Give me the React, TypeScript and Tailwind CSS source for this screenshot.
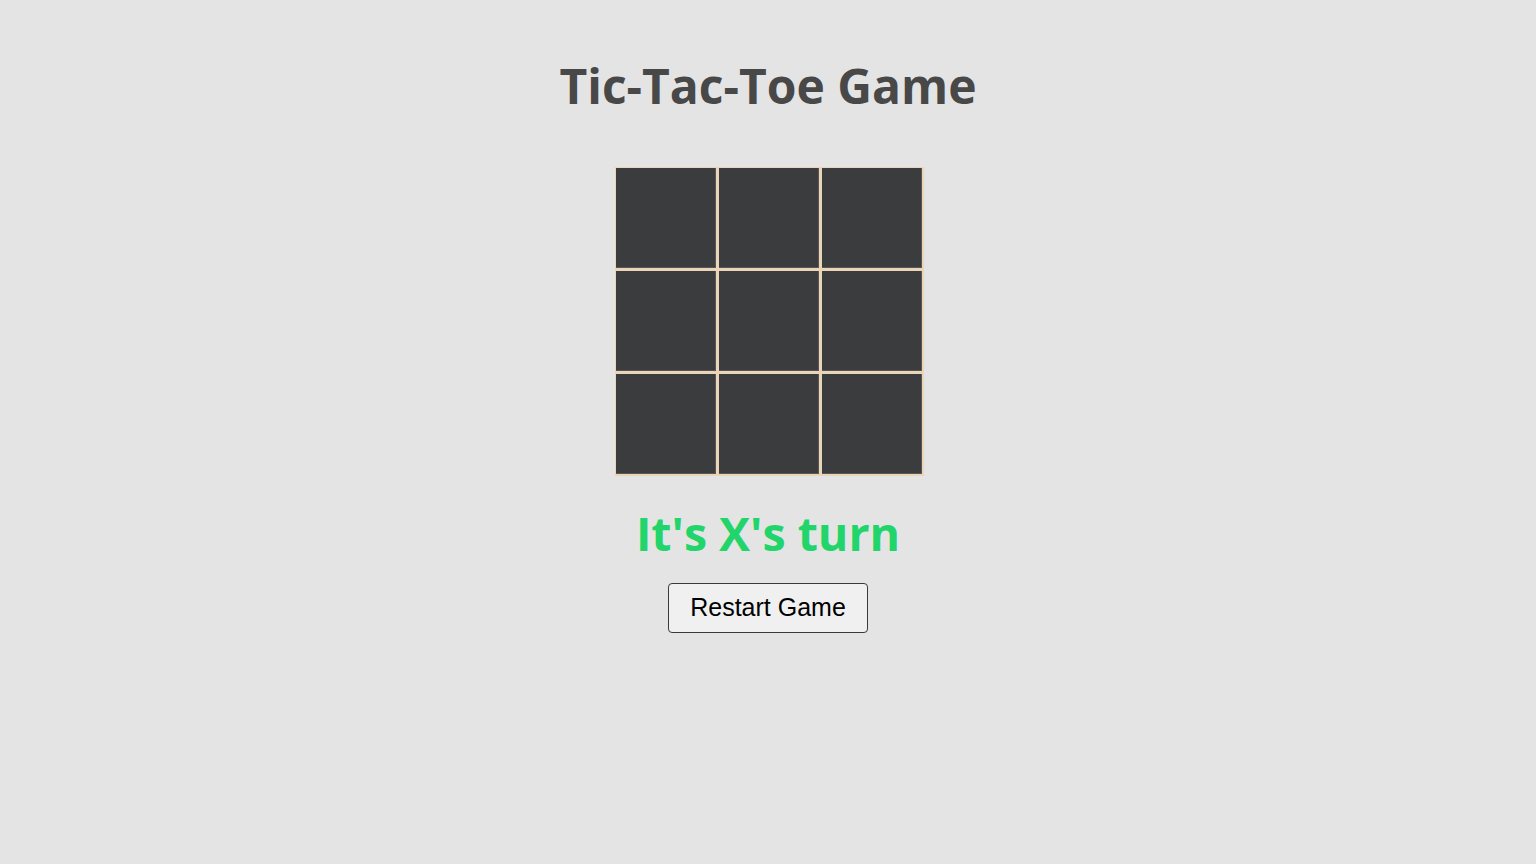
export default function App() {
  const cells = Array.from({ length: 9 });
  return (
    <div className="min-h-screen w-full bg-[#e4e4e4] flex flex-col items-center" style={{ fontFamily: '"Open Sans", sans-serif' }}>
      <h1 className="mt-[51px] text-[48px] leading-[70px] font-bold text-[#484848]">Tic-Tac-Toe Game</h1>
      <div className="mt-[46px] ml-[3px] grid grid-cols-[repeat(3,100px)] gap-[3px] pl-px pt-px pr-[2px] pb-[2px] bg-[#ebd5b8]">
        {cells.map((_, i) => (
          <div key={i} className="w-[100px] h-[100px] bg-[#3b3c3e] border-r border-b border-[#55575a]" />
        ))}
      </div>
      <div className="mt-[23px] text-[46.5px] leading-[68px] font-bold text-[#22d56a]">It's X's turn</div>
      <button className="mt-[16px] w-[200px] h-[50px] bg-[#f0f0f0] border border-[#3a3a3a] rounded-[4px] text-[25px] text-black" style={{ fontFamily: '"Liberation Sans", Arial, sans-serif' }}>Restart Game</button>
    </div>
  );
}
